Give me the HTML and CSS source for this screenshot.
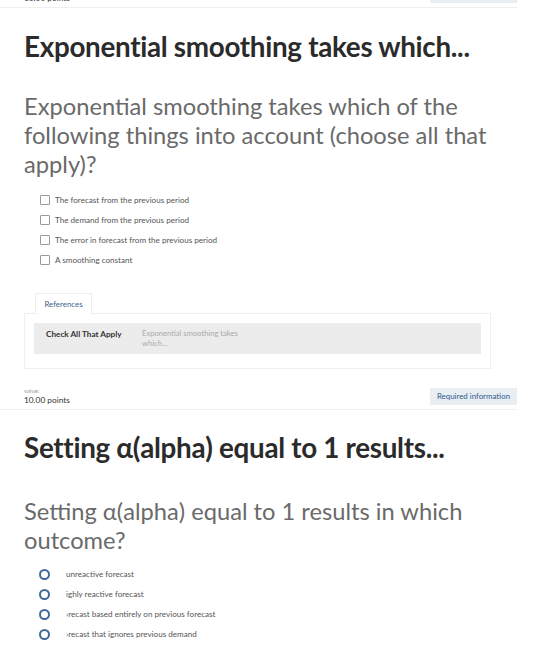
FILE: index.html
```html
<!DOCTYPE html>
<html>
<head>
<meta charset="utf-8">
<link rel="stylesheet" href="styles.css">
</head>
<body>
<div class="page">
  <div class="prev">
    <div class="prev-row">
      <div class="points">10.00 points</div>
      <div class="req req-prev">Required information</div>
    </div>
  </div>

  <section class="question">
    <h2 class="title">Exponential smoothing takes which...</h2>
    <p class="prompt">Exponential smoothing takes which of the following things into account (choose all that apply)?</p>
    <ul class="options">
      <li><span class="box"></span><span class="label">The forecast from the previous period</span></li>
      <li><span class="box"></span><span class="label">The demand from the previous period</span></li>
      <li><span class="box"></span><span class="label">The error in forecast from the previous period</span></li>
      <li><span class="box"></span><span class="label">A smoothing constant</span></li>
    </ul>
    <div class="refs">
      <div class="tab">References</div>
      <div class="panel">
        <div class="ref-item">
          <div class="ref-type">Check All That Apply</div>
          <div class="ref-text">Exponential smoothing takes which...</div>
        </div>
      </div>
    </div>
    <div class="footer">
      <div class="value">
        <div class="value-label">value:</div>
        <div class="points">10.00 points</div>
      </div>
      <div class="req">Required information</div>
    </div>
  </section>

  <section class="question q2">
    <h2 class="title">Setting α(alpha) equal to 1 results...</h2>
    <p class="prompt">Setting α(alpha) equal to 1 results in which outcome?</p>
    <ul class="options radios">
      <li><span class="radio"></span><span class="label">unreactive forecast</span></li>
      <li><span class="radio"></span><span class="label">ighly reactive forecast</span></li>
      <li><span class="radio"></span><span class="label">›recast based entirely on previous forecast</span></li>
      <li><span class="radio"></span><span class="label">›recast that ignores previous demand</span></li>
    </ul>
  </section>
</div>
</body>
</html>
```

FILE: styles.css
```css
* { box-sizing: border-box; }
html, body { margin: 0; padding: 0; background: #fff; }
body {
  font-family: "Lato", "Open Sans", sans-serif;
  color: #333;
}
.page {
  width: 517px;
}
.prev {
  height: 8px;
  overflow: hidden;
  border-bottom: 1px solid #efefef;
  display: flex;
  align-items: flex-end;
  padding: 0 0 4px 24px;
}
.prev-row {
  display: flex;
  justify-content: space-between;
  align-items: flex-end;
  width: 100%;
}
.points {
  font-size: 8.3px;
  color: #333;
  line-height: 10px;
}
.req {
  width: 87px;
  height: 17px;
  background: #e9eef3;
  color: #2e5a8a;
  font-size: 7.9px;
  display: flex;
  align-items: center;
  justify-content: center;
}

.question {
  padding: 0 0 0 24px;
}
.title {
  margin: 0;
  padding-top: 21px;
  font-size: 27.8px;
  font-weight: 700;
  color: #2b2b2b;
  line-height: 36px;
  letter-spacing: -0.3px;
}
.prompt {
  margin: 27px 0 0 0;
  font-size: 23.7px;
  line-height: 29px;
  color: #6a6a6a;
  font-weight: 400;
  width: 480px;
}
.options {
  list-style: none;
  margin: 11px 0 0 16px;
  padding: 0;
}
.options li {
  display: flex;
  align-items: center;
  height: 20px;
}
.box {
  width: 10px;
  height: 10px;
  border: 1px solid #9a9a9a;
  border-radius: 1px;
  margin-right: 5px;
  flex: none;
}
.label {
  font-size: 8.1px;
  color: #555;
}
.refs {
  margin: 23px 0 0 0;
  width: 467px;
}
.tab {
  margin-left: 11px;
  width: 57px;
  height: 21px;
  border: 1px solid #eee;
  border-bottom: none;
  background: #fff;
  color: #3a5f8c;
  font-size: 7.9px;
  display: flex;
  align-items: center;
  justify-content: center;
  position: relative;
  z-index: 1;
  margin-bottom: -1px;
}
.panel {
  border: 1px solid #eee;
  padding: 9px 9px 14px 9px;
}
.ref-item {
  background: #ececec;
  display: flex;
  padding: 6px 12px 6px 12px;
  min-height: 31px;
}
.ref-type {
  width: 96px;
  font-size: 8.2px;
  color: #333;
  font-weight: 700;
  line-height: 10px;
}
.ref-text {
  width: 108px;
  font-size: 7.6px;
  color: #aaa;
  line-height: 9.5px;
}
.footer {
  display: flex;
  justify-content: space-between;
  align-items: center;
  margin-top: 18px;
  padding-bottom: 4px;
  border-bottom: 1px solid #efefef;
  margin-left: -24px;
  padding-left: 24px;
}
.value-label {
  font-size: 6px;
  color: #999;
  line-height: 8px;
}
.footer .points { line-height: 10px; }
.q2 .title { padding-top: 20px; }
.q2 .prompt { margin-top: 31px; }
.radios { margin-top: 9px; margin-left: 15px; }
.radio {
  width: 11px;
  height: 11px;
  border: 2px solid #3f6a98;
  border-radius: 50%;
  flex: none;
  margin-right: 16px;
}
```
